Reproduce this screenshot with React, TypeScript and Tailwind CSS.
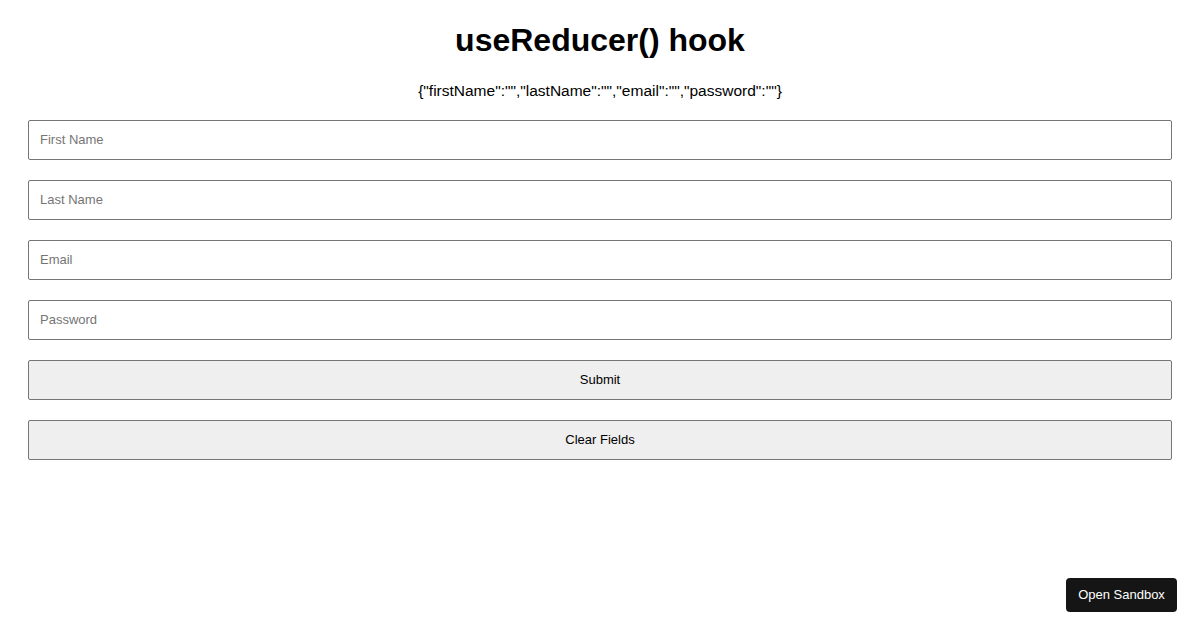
import { useReducer } from "react";

type State = { firstName: string; lastName: string; email: string; password: string };

const initial: State = { firstName: "", lastName: "", email: "", password: "" };

function reducer(state: State, action: { type: string; field?: keyof State; value?: string }): State {
  switch (action.type) {
    case "change":
      return { ...state, [action.field as string]: action.value ?? "" };
    case "clear":
      return initial;
    default:
      return state;
  }
}

export default function App() {
  const [state, dispatch] = useReducer(reducer, initial);

  const fields: { name: keyof State; label: string; type: string }[] = [
    { name: "firstName", label: "First Name", type: "text" },
    { name: "lastName", label: "Last Name", type: "text" },
    { name: "email", label: "Email", type: "email" },
    { name: "password", label: "Password", type: "password" },
  ];

  return (
    <div className="min-h-[630px] bg-white font-['Liberation_Sans',Arial,sans-serif] text-black px-[28px]">
      <h1 className="pt-[22px] text-[32px] leading-[37px] font-bold text-center">useReducer() hook</h1>
      <p className="mt-[23px] text-[15.5px] leading-[18px] text-center">{JSON.stringify(state)}</p>

      <form
        className="mt-[20px] flex flex-col gap-[20px]"
        onSubmit={(e) => e.preventDefault()}
      >
        {fields.map((f) => (
          <input
            key={f.name}
            type={f.type}
            placeholder={f.label}
            value={state[f.name]}
            onChange={(e) => dispatch({ type: "change", field: f.name, value: e.target.value })}
            className="h-[40px] w-full rounded-[2px] border border-[#767676] px-[11px] pb-[2px] text-[13px] placeholder:text-[#757575] outline-none"
          />
        ))}
        <button
          type="submit"
          className="h-[40px] w-full rounded-[2px] border border-[#767676] bg-[#efefef] text-[13px]"
        >
          Submit
        </button>
        <button
          type="button"
          onClick={() => dispatch({ type: "clear" })}
          className="h-[40px] w-full rounded-[2px] border border-[#767676] bg-[#efefef] text-[13px]"
        >
          Clear Fields
        </button>
      </form>

      <button className="fixed right-[23px] bottom-[18px] h-[34px] w-[111px] rounded-[4px] bg-[#151515] text-[13px] text-white">
        Open Sandbox
      </button>
    </div>
  );
}
